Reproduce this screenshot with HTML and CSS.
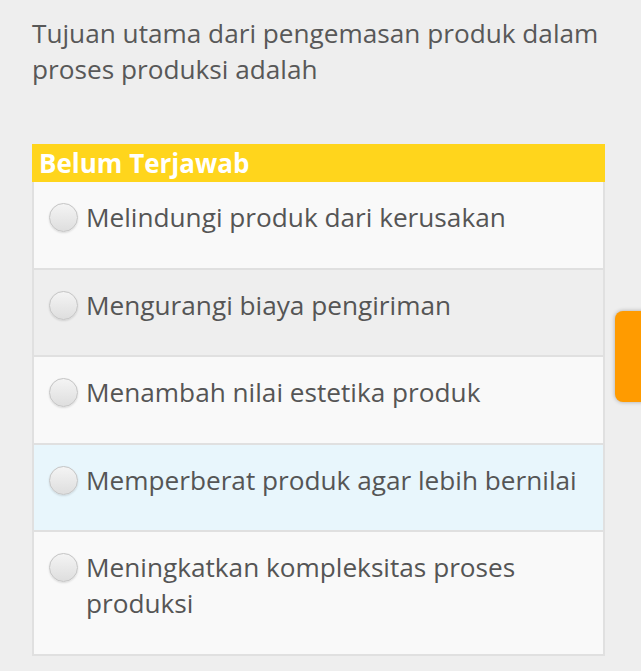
FILE: index.html
```html
<!DOCTYPE html>
<html lang="id">
<head>
<meta charset="utf-8">
<title>Soal</title>
<link rel="stylesheet" href="styles.css">
</head>
<body>
<main class="page">
  <p class="question">Tujuan utama dari pengemasan produk dalam proses produksi adalah</p>
  <section class="card">
    <div class="status">Belum Terjawab</div>
    <ul class="options">
      <li class="option"><span class="radio"></span><span class="label">Melindungi produk dari kerusakan</span></li>
      <li class="option option-grey"><span class="radio"></span><span class="label">Mengurangi biaya pengiriman</span></li>
      <li class="option"><span class="radio"></span><span class="label">Menambah nilai estetika produk</span></li>
      <li class="option option-blue"><span class="radio"></span><span class="label">Memperberat produk agar lebih bernilai</span></li>
      <li class="option option-last"><span class="radio"></span><span class="label">Meningkatkan kompleksitas proses produksi</span></li>
    </ul>
  </section>
</main>
<div class="side-tab"></div>
</body>
</html>
```
FILE: styles.css
```css
html, body {
  margin: 0;
  padding: 0;
  background: #eeeeee;
}
body {
  font-family: "Open Sans", "Noto Sans", sans-serif;
  color: #555555;
}
.page {
  padding: 15px 37px 0 32px;
}
.question {
  margin: 0;
  font-size: 26.2px;
  line-height: 36px;
  color: #585858;
}
.card {
  margin-top: 57px;
  width: 573px;
}
.status {
  background: #ffd51c;
  color: #ffffff;
  font-weight: 700;
  font-size: 26px;
  line-height: 38px;
  height: 38px;
  padding-left: 7px;
}
.options {
  list-style: none;
  margin: 0;
  padding: 0;
  border-left: 2px solid #e0e0e0;
  border-right: 2px solid #e0e0e0;
  border-bottom: 2px solid #e0e0e0;
}
.option {
  display: flex;
  align-items: flex-start;
  gap: 8px;
  background: #f9f9f9;
  padding: 17px 16px 32.5px 15px;
  border-bottom: 2px solid #e0e0e0;
  font-size: 26.2px;
  line-height: 36px;
  color: #555555;
}
.option-last {
  border-bottom: none;
  padding-bottom: 33px;
}
.option-grey {
  background: #eeeeee;
}
.option-blue {
  background: #e8f6fc;
}
.radio {
  flex: none;
  width: 27px;
  height: 27px;
  margin-top: 4px;
  border-radius: 50%;
  border: 1px solid #c4c4c4;
  background: linear-gradient(#f4f4f4, #dedede);
  box-shadow: 0 1px 2px rgba(0,0,0,0.12);
}
.label {
  display: block;
}
.side-tab {
  position: absolute;
  left: 615px;
  top: 311px;
  width: 40px;
  height: 91px;
  background: #ff9b00;
  border-radius: 8px;
  box-shadow: 0 0 4px rgba(0,0,0,0.3);
}
```
